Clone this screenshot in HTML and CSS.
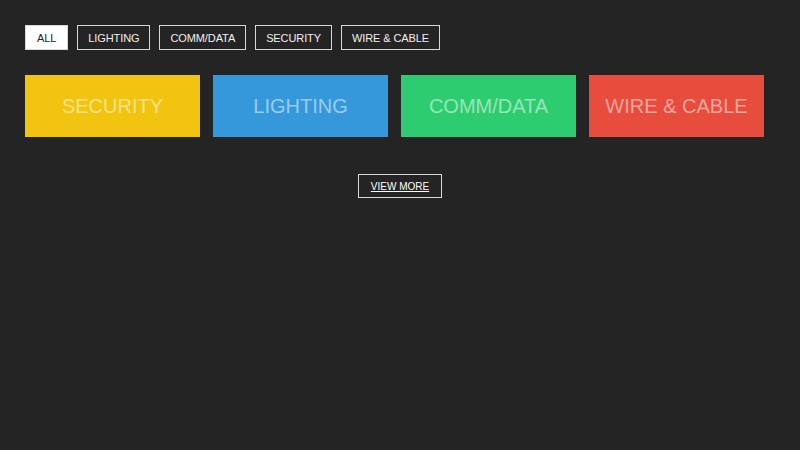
FILE: index.html
```html
<!DOCTYPE html>
<html>
<head>
<meta charset="utf-8">
<link rel="stylesheet" href="styles.css">
</head>
<body>
<div class="page">
  <div class="filters">
    <button class="filter active">ALL</button>
    <button class="filter">LIGHTING</button>
    <button class="filter">COMM/DATA</button>
    <button class="filter">SECURITY</button>
    <button class="filter">WIRE &amp; CABLE</button>
  </div>
  <div class="tiles">
    <div class="tile yellow">SECURITY</div>
    <div class="tile blue">LIGHTING</div>
    <div class="tile green">COMM/DATA</div>
    <div class="tile red">WIRE &amp; CABLE</div>
  </div>
  <div class="more-row">
    <a class="more" href="#">VIEW MORE</a>
  </div>
</div>
</body>
</html>
```
FILE: styles.css
```css
html, body {
  margin: 0;
  padding: 0;
  background: #242424;
  font-family: "Liberation Sans", Arial, sans-serif;
}
.page {
  padding: 25px;
}
.filters {
  display: flex;
  gap: 9px;
}
.filter {
  height: 25px;
  padding: 0 10px;
  background: transparent;
  border: 1px solid #d8d8d8;
  color: #f0f0f0;
  font-family: "Liberation Sans", Arial, sans-serif;
  font-size: 11px;
  letter-spacing: -0.1px;
  margin: 0;
}
.filter.active {
  background: #ffffff;
  color: #222222;
  padding: 0 11px;
}
.tiles {
  display: grid;
  grid-template-columns: repeat(4, 175px);
  gap: 13px;
  margin-top: 25px;
}
.tile {
  height: 62px;
  display: flex;
  align-items: center;
  justify-content: center;
  font-size: 20px;
  color: rgba(255, 255, 255, 0.5);
}
.yellow { background: #f1c40f; }
.blue { background: #3498db; }
.green { background: #2ecc71; }
.red { background: #e74c3c; }
.more-row {
  display: flex;
  justify-content: center;
  margin-top: 37px;
}
.more {
  display: flex;
  align-items: center;
  height: 22px;
  padding: 0 12px;
  border: 1px solid #d8d8d8;
  color: #ffffff;
  font-size: 10px;
  text-decoration: underline;
}
```
